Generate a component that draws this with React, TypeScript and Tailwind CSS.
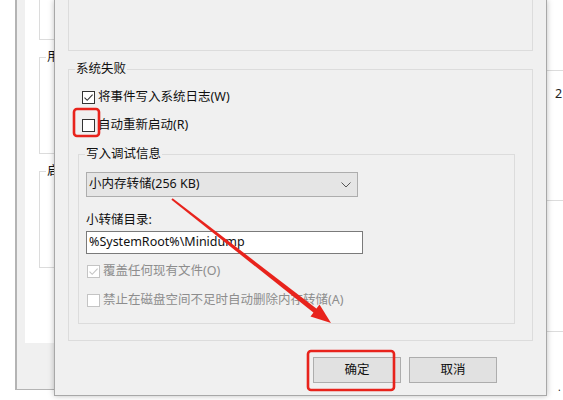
import React from 'react';

const font = { fontFamily: '"Noto Sans", "Noto Sans CJK SC", sans-serif' };

const CheckBox: React.FC<{ checked?: boolean; disabled?: boolean }> = ({ checked, disabled }) => (
  <span
    className={`relative inline-flex h-[13px] w-[13px] shrink-0 items-center justify-center border bg-white ${
      disabled ? 'border-[#c4c4c4]' : 'border-[#333333]'
    }`}
  >
    {checked && (
      <svg width="11" height="11" viewBox="0 0 11 11" className="absolute">
        <path
          d="M1.5 5.6 L4.2 8.3 L9.6 2.6"
          fill="none"
          stroke={disabled ? '#c4c4c4' : '#333333'}
          strokeWidth="1.1"
        />
      </svg>
    )}
  </span>
);

const CheckRow: React.FC<{ label: string; checked?: boolean; disabled?: boolean; className?: string }> = ({
  label,
  checked,
  disabled,
  className,
}) => (
  <div className={`flex h-[16px] items-center gap-[3px] ${className ?? ''}`}>
    <CheckBox checked={checked} disabled={disabled} />
    <span className={`text-[12.5px] leading-none whitespace-nowrap ${disabled ? 'text-[#8d8d8d]' : 'text-[#111]'}`}>
      {label}
    </span>
  </div>
);

const GroupBox: React.FC<{ title: string; className?: string; bg?: string; children?: React.ReactNode }> = ({
  title,
  className,
  bg = 'bg-[#f0f0f0]',
  children,
}) => (
  <div className={`relative border border-[#dcdcdc] ${className ?? ''}`}>
    <span
      className={`absolute -top-[9px] left-[6px] whitespace-nowrap ${bg} px-[1px] text-[12.5px] leading-[16px] text-[#111]`}
    >
      {title}
    </span>
    {children}
  </div>
);

export default function App() {
  return (
    <div className="relative h-[400px] w-[563px] overflow-hidden bg-white" style={font}>
      {/* window behind, left part (the rest is covered by the dialog) */}
      <div className="absolute left-[15px] top-0 flex h-[390px] w-[40px] border-b border-l-2 border-[#b4b4b4] bg-[#f0f0f0] pl-[8px]">
        <div className="flex h-[343px] w-full flex-col bg-white pl-[14px]">
          <div className="h-[40px] border-b border-l border-[#dcdcdc]" />
          <GroupBox title="用" bg="bg-white" className="mt-[17px] h-[97px] border-r-0" />
          <GroupBox title="启" bg="bg-white" className="mt-[17px] h-[97px] border-r-0" />
        </div>
      </div>

      {/* window behind, right part */}
      <div className="absolute left-[547px] top-0 flex h-[400px] w-[16px] flex-col">
        <div className="h-[71px] shrink-0 border-b border-[#dcdcdc]" />
        <span className="ml-[8px] mt-[15px] text-[12.5px] leading-[16px] text-[#222]">2</span>
        <div className="h-[99px] shrink-0 border-b border-[#dcdcdc]" />
        <div className="h-[131px] shrink-0 border-b border-[#dcdcdc]" />
        <span className="ml-[11px] mt-[50px] text-[10px] leading-[10px] text-[#222]">.</span>
      </div>

      {/* dialog */}
      <div className="absolute left-[54px] top-0 flex h-[396px] w-[493px] flex-col border-x border-b border-[#a8a8a8] bg-[#f0f0f0] pl-[13px] shadow-[0_0_6px_rgba(0,0,0,0.25)]">
        <div className="h-[51px] w-[465px] border-x border-b border-[#dcdcdc]" />

        <GroupBox title="系统失败" className="mt-[18px] h-[272px] w-[465px] pl-[13px] pt-[19px]">
          <CheckRow label="将事件写入系统日志(W)" checked />
          <CheckRow label="自动重新启动(R)" className="mt-[12px]" />

          <GroupBox title="写入调试信息" className="-ml-[4px] mt-[21px] h-[170px] w-[437px] pl-[7px] pt-[17px]">
            <div className="flex h-[25px] w-[272px] items-center justify-between border border-[#adadad] bg-[#e5e5e5] pl-[2px] pr-[6px]">
              <span className="text-[12.5px] leading-none text-[#111]">小内存转储(256 KB)</span>
              <svg width="10" height="6" viewBox="0 0 10 6">
                <path d="M0.5 0.5 L5 5 L9.5 0.5" fill="none" stroke="#555" strokeWidth="1" />
              </svg>
            </div>
            <div className="mt-[15px] h-[16px] text-[12.5px] leading-[16px] text-[#111]">小转储目录:</div>
            <div className="mt-[3px] flex h-[23px] w-[277px] items-center border border-[#7a7a7a] bg-white pl-[2px]">
              <span className="text-[12.5px] leading-none text-[#111]">%SystemRoot%\Minidump</span>
            </div>
            <CheckRow label="覆盖任何现有文件(O)" checked disabled className="ml-[1px] mt-[9px]" />
            <CheckRow label="禁止在磁盘空间不足时自动删除内存转储(A)" disabled className="ml-[1px] mt-[13px]" />
          </GroupBox>
        </GroupBox>

        <div className="mt-[16px] flex gap-[8px] pl-[245px]">
          <button className="h-[26px] w-[88px] border border-[#adadad] bg-[#e1e1e1] text-[12.5px] text-[#111]">确定</button>
          <button className="h-[26px] w-[88px] border border-[#adadad] bg-[#e1e1e1] text-[12.5px] text-[#111]">取消</button>
        </div>
      </div>

      {/* annotations */}
      <svg className="pointer-events-none absolute left-0 top-0" width="563" height="400" viewBox="0 0 563 400">
        <rect x="74" y="109" width="25" height="27" rx="3" fill="none" stroke="#e8231c" strokeWidth="2.6" />
        <rect x="308" y="351" width="86" height="39" rx="3" fill="none" stroke="#e8231c" strokeWidth="2.6" />
        <polygon points="171.4,199.8 172.6,198.2 317,309 314,313" fill="#e8231c" />
        <polygon points="331,323 310.5,316.5 319.5,304.5" fill="#e8231c" />
      </svg>
    </div>
  );
}
